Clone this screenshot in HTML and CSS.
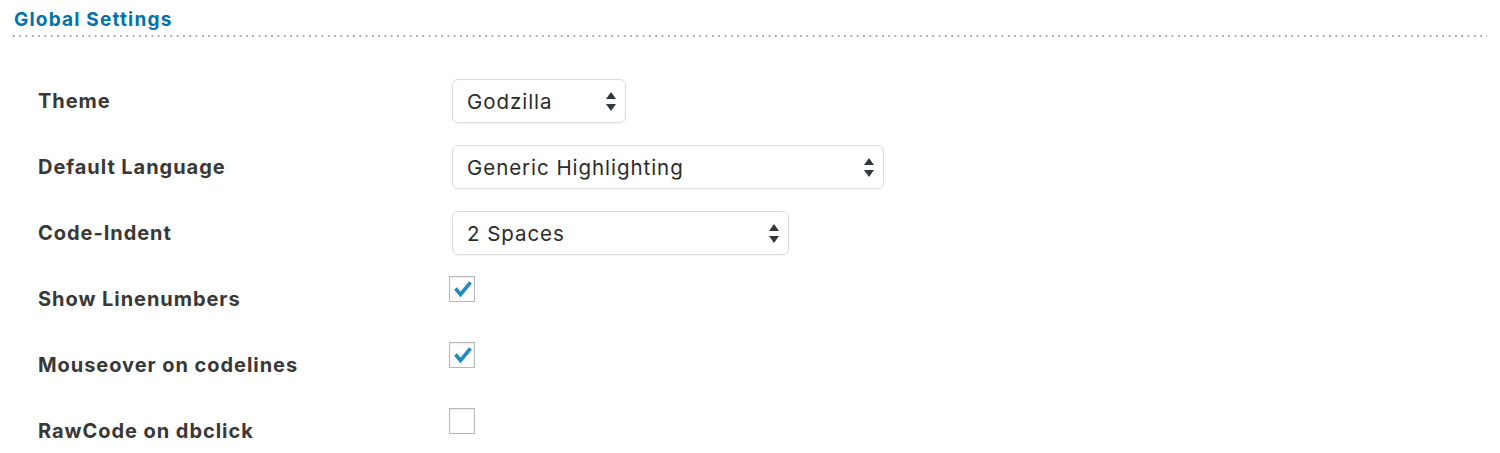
FILE: index.html
```html
<!DOCTYPE html>
<html lang="en">
<head>
    <meta charset="UTF-8">
    <title>Global Settings</title>
    <link rel="stylesheet" href="styles.css">
</head>
<body>
    <div class="section">
        <h2 class="section-title">Global Settings</h2>

        <div class="form-table">
            <!-- Theme -->
            <div class="row">
                <div class="label">Theme</div>
                <div class="field">
                    <div class="select select-theme">
                        <span>Godzilla</span>
                        <svg class="arrows" width="10" height="19" viewBox="0 0 10 19"><polygon points="0,7 5,0 10,7"/><polygon points="0,12 10,12 5,19"/></svg>
                    </div>
                </div>
            </div>

            <!-- Default Language -->
            <div class="row">
                <div class="label">Default Language</div>
                <div class="field">
                    <div class="select select-lang">
                        <span>Generic Highlighting</span>
                        <svg class="arrows" width="10" height="19" viewBox="0 0 10 19"><polygon points="0,7 5,0 10,7"/><polygon points="0,12 10,12 5,19"/></svg>
                    </div>
                </div>
            </div>

            <!-- Code-Indent -->
            <div class="row">
                <div class="label">Code-Indent</div>
                <div class="field">
                    <div class="select select-indent">
                        <span>2 Spaces</span>
                        <svg class="arrows" width="10" height="19" viewBox="0 0 10 19"><polygon points="0,7 5,0 10,7"/><polygon points="0,12 10,12 5,19"/></svg>
                    </div>
                </div>
            </div>

            <!-- Checkboxes -->
            <div class="row">
                <div class="label">Show Linenumbers</div>
                <div class="field field-check">
                    <div class="checkbox">
                        <svg width="26" height="26" viewBox="0 0 26 26"><polyline points="6.5,12.5 11.5,18.5 21.5,6.5"/></svg>
                    </div>
                </div>
            </div>

            <div class="row">
                <div class="label">Mouseover on codelines</div>
                <div class="field field-check">
                    <div class="checkbox">
                        <svg width="26" height="26" viewBox="0 0 26 26"><polyline points="6.5,12.5 11.5,18.5 21.5,6.5"/></svg>
                    </div>
                </div>
            </div>

            <div class="row">
                <div class="label">RawCode on dbclick</div>
                <div class="field field-check">
                    <div class="checkbox"></div>
                </div>
            </div>
        </div>
    </div>
</body>
</html>
```

FILE: styles.css
```css
* {
    margin: 0;
    padding: 0;
    box-sizing: border-box;
}

body {
    background-color: #fff;
    font-family: Inter, "Liberation Sans", sans-serif;
    color: #32373c;
}

.section {
    padding: 0 13px 0 13px;
}

.section-title {
    font-size: 19px;
    font-weight: 700;
    letter-spacing: 1.2px;
    color: #0073aa;
    padding: 8px 0 0 1px;
    height: 37px;
    background-image: linear-gradient(to right, #aaa 2px, transparent 2px);
    background-size: 6.3px 2px;
    background-repeat: repeat-x;
    background-position: 0 bottom;
}

.form-table {
    padding: 31px 0 0 25px;
}

.row {
    display: flex;
    align-items: center;
    height: 66px;
}

.label {
    width: 414px;
    font-size: 20px;
    font-weight: 700;
    letter-spacing: 0.95px;
    color: #383838;
}

.select {
    display: flex;
    align-items: center;
    justify-content: space-between;
    height: 44px;
    padding: 0 9px 0 14px;
    border: 1px solid #dcdcdc;
    border-radius: 6px;
    box-shadow: 0 1px 2px rgba(0, 0, 0, 0.05);
    font-size: 20.5px;
    letter-spacing: 0.95px;
    color: #2b2b2b;
}

.select-theme {
    width: 174px;
}

.select-lang {
    width: 432px;
}

.select-indent {
    width: 337px;
}

.arrows {
    fill: #32373c;
}

.field-check {
    align-self: flex-start;
    padding-top: 10px;
    margin-left: -3px;
}

.checkbox {
    width: 26px;
    height: 26px;
    border: 1.5px solid #b4b9be;
    box-shadow: inset 0 1px 2px rgba(0, 0, 0, 0.08);
    background: #fff;
}

.checkbox svg {
    display: block;
    margin: -1.5px;
}

.checkbox polyline {
    fill: none;
    stroke: #1e8cbe;
    stroke-width: 3.6;
}
```
